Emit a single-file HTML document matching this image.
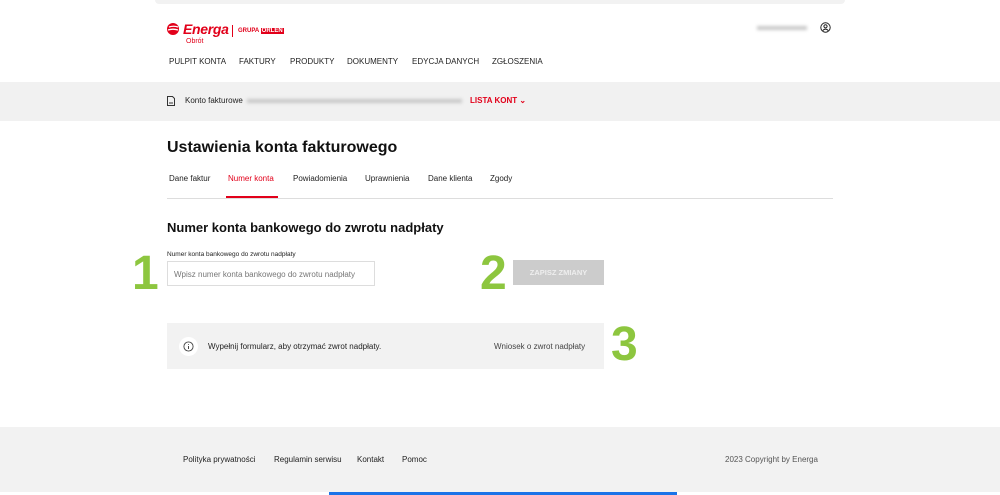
<!DOCTYPE html>
<html><head><meta charset="utf-8"><style>
*{margin:0;padding:0;box-sizing:border-box}
body{width:1000px;height:495px;overflow:hidden;background:#fff;font-family:"Liberation Sans",sans-serif;color:#222;position:relative}
.a{position:absolute;white-space:nowrap}
.nav{font-size:8px;top:57px;color:#222}
.tab{font-size:8px;top:174px;color:#222}
.big{color:#8dc63f;font-weight:bold;font-size:48px;line-height:1}
.blur{background:#c8c8c8;filter:blur(1.5px);height:4px}
</style></head><body>
<div class="a" style="left:155px;top:0;width:690px;height:4px;background:#f2f2f2;border-radius:0 0 4px 4px"></div>
<svg class="a" style="left:166px;top:22px" width="14" height="14" viewBox="0 0 14 14"><circle cx="7" cy="7" r="6" fill="#e2001a"/><path d="M2 8c3-1 7-1 10 0M3 5c3-1 6-1 9 0" stroke="#fff" stroke-width="1.3" fill="none"/></svg>
<div class="a" style="left:183px;top:21px;font-size:14px;font-weight:bold;font-style:italic;color:#e2001a;letter-spacing:-0.3px">Energa</div>
<div class="a" style="left:186px;top:38px;font-size:7px;color:#e2001a">Obrót</div>
<div class="a" style="left:232px;top:25px;width:1px;height:12px;background:#e2001a"></div>
<div class="a" style="left:238px;top:28px;font-size:6px;font-weight:bold;color:#e2001a">GRUPA <span style="background:#e2001a;color:#fff;padding:0 1px">ORLEN</span></div>
<div class="a blur" style="left:757px;top:26px;width:50px"></div>
<svg class="a" style="left:820px;top:22px" width="11" height="11" viewBox="0 0 11 11"><circle cx="5.5" cy="5.5" r="4.7" fill="none" stroke="#222" stroke-width="1"/><circle cx="5.5" cy="4.3" r="1.6" fill="none" stroke="#222"/><path d="M2.8 8.6c1.5-2 4-2 5.4 0" stroke="#222" fill="none"/></svg>
<div class="a nav" style="left:169px">PULPIT KONTA</div>
<div class="a nav" style="left:239px">FAKTURY</div>
<div class="a nav" style="left:290px">PRODUKTY</div>
<div class="a nav" style="left:347px">DOKUMENTY</div>
<div class="a nav" style="left:412px">EDYCJA DANYCH</div>
<div class="a nav" style="left:492px">ZGŁOSZENIA</div>
<div class="a" style="left:0;top:82px;width:1000px;height:39px;background:#f1f1f1"></div>
<svg class="a" style="left:167px;top:96px" width="8" height="10" viewBox="0 0 8 10"><path d="M.5.5h5l2 2v7h-7z" fill="none" stroke="#333"/><path d="M2 7h4" stroke="#333"/></svg>
<div class="a" style="left:185px;top:96px;font-size:8px">Konto fakturowe</div>
<div class="a blur" style="left:247px;top:99px;width:215px"></div>
<div class="a" style="left:470px;top:96px;font-size:8px;font-weight:bold;color:#e2001a">LISTA KONT ⌄</div>
<div class="a" style="left:167px;top:139px;font-size:16px;font-weight:bold;color:#111">Ustawienia konta fakturowego</div>
<div class="a tab" style="left:169px">Dane faktur</div>
<div class="a tab" style="left:228px;color:#e2001a">Numer konta</div>
<div class="a tab" style="left:293px">Powiadomienia</div>
<div class="a tab" style="left:365px">Uprawnienia</div>
<div class="a tab" style="left:428px">Dane klienta</div>
<div class="a tab" style="left:490px">Zgody</div>
<div class="a" style="left:167px;top:198px;width:666px;height:1px;background:#ddd"></div>
<div class="a" style="left:226px;top:196px;width:52px;height:2px;background:#e2001a"></div>
<div class="a" style="left:167px;top:220px;font-size:13px;font-weight:bold;color:#111">Numer konta bankowego do zwrotu nadpłaty</div>
<div class="a" style="left:167px;top:251px;font-size:6.5px">Numer konta bankowego do zwrotu nadpłaty</div>
<div class="a" style="left:167px;top:261px;width:208px;height:25px;border:1px solid #ddd;font-size:8px;color:#777;padding:8px 6px">Wpisz numer konta bankowego do zwrotu nadpłaty</div>
<div class="a big" style="left:132px;top:250px">1</div>
<div class="a big" style="left:480px;top:250px">2</div>
<div class="a big" style="left:611px;top:321px">3</div>
<div class="a" style="left:513px;top:260px;width:91px;height:25px;background:#ccc;color:#eee;font-size:7.5px;font-weight:bold;text-align:center;line-height:25px">ZAPISZ ZMIANY</div>
<div class="a" style="left:167px;top:323px;width:437px;height:46px;background:#f2f2f2"></div>
<div class="a" style="left:179px;top:337px;width:19px;height:19px;border-radius:50%;background:#fff"></div>
<svg class="a" style="left:183px;top:341px" width="11" height="11" viewBox="0 0 11 11"><circle cx="5.5" cy="5.5" r="4.6" fill="none" stroke="#444" stroke-width=".9"/><path d="M5.5 5v3M5.5 3.2v.8" stroke="#444"/></svg>
<div class="a" style="left:208px;top:342px;font-size:8px">Wypełnij formularz, aby otrzymać zwrot nadpłaty.</div>
<div class="a" style="left:494px;top:342px;font-size:8px;color:#444">Wniosek o zwrot nadpłaty</div>
<div class="a" style="left:0;top:427px;width:1000px;height:65px;background:#f2f2f2"></div>
<div class="a" style="left:183px;top:455px;font-size:8px">Polityka prywatności</div>
<div class="a" style="left:274px;top:455px;font-size:8px">Regulamin serwisu</div>
<div class="a" style="left:357px;top:455px;font-size:8px">Kontakt</div>
<div class="a" style="left:402px;top:455px;font-size:8px">Pomoc</div>
<div class="a" style="left:725px;top:455px;font-size:8px;color:#555">2023 Copyright by Energa</div>
<div class="a" style="left:329px;top:492px;width:348px;height:3px;background:#1a73e8"></div>
</body></html>
